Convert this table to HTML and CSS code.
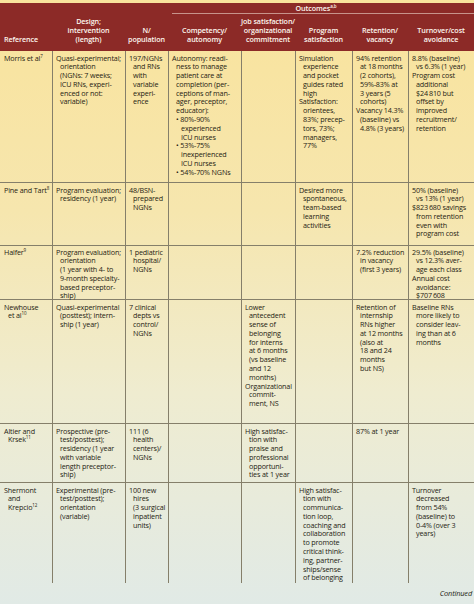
FILE: index.html
```html
<!DOCTYPE html>
<html>
<head>
<meta charset="utf-8">
<link rel="stylesheet" href="styles.css">
</head>
<body>
<div class="page">
  <div class="head">
    <div class="th ref"><span>Reference</span></div>
    <div class="th dsg"><span>Design;<br>intervention<br>(length)</span></div>
    <div class="th pop"><span>N/<br>population</span></div>
    <div class="th out"><span>Outcomes<sup class="hs">a,b</sup></span></div>
    <div class="th s1"><span>Competency/<br>autonomy</span></div>
    <div class="th s2"><span>Job satisfaction/<br>organizational<br>commitment</span></div>
    <div class="th s3"><span>Program<br>satisfaction</span></div>
    <div class="th s4"><span>Retention/<br>vacancy</span></div>
    <div class="th s5"><span>Turnover/cost<br>avoidance</span></div>
  </div>

  <div class="row r1">
    <div class="c first"><p class="b">Morris et al<sup>7</sup></p></div>
    <div class="c"><p class="b">Quasi-experimental;<br>orientation<br>(NGNs: 7 weeks;<br>ICU RNs, experi-<br>enced or not:<br>variable)</p></div>
    <div class="c"><p class="b">197/NGNs<br>and RNs<br>with<br>variable<br>experi-<br>ence</p></div>
    <div class="c"><p class="b">Autonomy: readi-<br>ness to manage<br>patient care at<br>completion (per-<br>ceptions of man-<br>ager, preceptor,<br>educator):</p><p class="b bl">•&nbsp;80%-90%<br>experienced<br>ICU nurses</p><p class="b bl">•&nbsp;53%-75%<br>inexperienced<br>ICU nurses</p><p class="b bl">•&nbsp;54%-70% NGNs</p></div>
    <div class="c"></div>
    <div class="c"><p class="b">Simulation<br>experience<br>and pocket<br>guides rated<br>high</p><p class="b">Satisfaction:<br>orientees,<br>83%; precep-<br>tors, 73%;<br>managers,<br>77%</p></div>
    <div class="c"><p class="b">94% retention<br>at 18 months<br>(2 cohorts),<br>59%-83% at<br>3 years (5<br>cohorts)</p><p class="b">Vacancy 14.3%<br>(baseline) vs<br>4.8% (3 years)</p></div>
    <div class="c"><p class="b">8.8% (baseline)<br>vs 6.3% (1 year)</p><p class="b">Program cost<br>additional<br>$24&#8201;810 but<br>offset by<br>improved<br>recruitment/<br>retention</p></div>
  </div>

  <div class="row r2">
    <div class="c first"><p class="b">Pine and Tart<sup>8</sup></p></div>
    <div class="c"><p class="b">Program evaluation;<br>residency (1 year)</p></div>
    <div class="c"><p class="b">48/BSN-<br>prepared<br>NGNs</p></div>
    <div class="c"></div>
    <div class="c"></div>
    <div class="c"><p class="b">Desired more<br>spontaneous,<br>team-based<br>learning<br>activities</p></div>
    <div class="c"></div>
    <div class="c"><p class="b">50% (baseline)<br>vs 13% (1 year)</p><p class="b">$823&#8201;680 savings<br>from retention<br>even with<br>program cost</p></div>
  </div>

  <div class="row r3">
    <div class="c first"><p class="b">Halfer<sup>9</sup></p></div>
    <div class="c"><p class="b">Program evaluation;<br>orientation<br>(1 year with 4- to<br>9-month specialty-<br>based preceptor-<br>ship)</p></div>
    <div class="c"><p class="b">1 pediatric<br>hospital/<br>NGNs</p></div>
    <div class="c"></div>
    <div class="c"></div>
    <div class="c"></div>
    <div class="c"><p class="b">7.2% reduction<br>in vacancy<br>(first 3 years)</p></div>
    <div class="c"><p class="b">29.5% (baseline)<br>vs 12.3% aver-<br>age each class</p><p class="b">Annual cost<br>avoidance:<br>$707&#8201;608</p></div>
  </div>

  <div class="row r4">
    <div class="c first"><p class="b">Newhouse<br>et al<sup>10</sup></p></div>
    <div class="c"><p class="b">Quasi-experimental<br>(posttest); intern-<br>ship (1 year)</p></div>
    <div class="c"><p class="b">7 clinical<br>depts vs<br>control/<br>NGNs</p></div>
    <div class="c"></div>
    <div class="c"><p class="b">Lower<br>antecedent<br>sense of<br>belonging<br>for interns<br>at 6 months<br>(vs baseline<br>and 12<br>months)</p><p class="b">Organizational<br>commit-<br>ment, NS</p></div>
    <div class="c"></div>
    <div class="c"><p class="b">Retention of<br>internship<br>RNs higher<br>at 12 months<br>(also at<br>18 and 24<br>months<br>but NS)</p></div>
    <div class="c"><p class="b">Baseline RNs<br>more likely to<br>consider leav-<br>ing than at 6<br>months</p></div>
  </div>

  <div class="row r5">
    <div class="c first"><p class="b">Altier and<br>Krsek<sup>11</sup></p></div>
    <div class="c"><p class="b">Prospective (pre-<br>test/posttest);<br>residency (1 year<br>with variable<br>length preceptor-<br>ship)</p></div>
    <div class="c"><p class="b">111 (6<br>health<br>centers)/<br>NGNs</p></div>
    <div class="c"></div>
    <div class="c"><p class="b">High satisfac-<br>tion with<br>praise and<br>professional<br>opportuni-<br>ties at 1 year</p></div>
    <div class="c"></div>
    <div class="c"><p class="b">87% at 1 year</p></div>
    <div class="c"></div>
  </div>

  <div class="row r6">
    <div class="c first"><p class="b">Shermont<br>and<br>Krepcio<sup>12</sup></p></div>
    <div class="c"><p class="b">Experimental (pre-<br>test/posttest);<br>orientation<br>(variable)</p></div>
    <div class="c"><p class="b">100 new<br>hires<br>(3 surgical<br>inpatient<br>units)</p></div>
    <div class="c"></div>
    <div class="c"></div>
    <div class="c"><p class="b">High satisfac-<br>tion with<br>communica-<br>tion loop,<br>coaching and<br>collaboration<br>to promote<br>critical think-<br>ing, partner-<br>ships/sense<br>of belonging</p></div>
    <div class="c"></div>
    <div class="c"><p class="b">Turnover<br>decreased<br>from 54%<br>(baseline) to<br>0-4% (over 3<br>years)</p></div>
  </div>

  <div class="cont">Continued</div>
</div>
</body>
</html>
```
FILE: styles.css
```css
html, body {
  margin: 0;
  padding: 0;
}
body {
  width: 474px;
  height: 604px;
  overflow: hidden;
  background: linear-gradient(to bottom, #f9e39c 0%, #f6e6ae 35%, #efecd0 65%, #e1eae6 100%);
  font-family: "Open Sans", "Noto Sans", sans-serif;
  font-size: 7.2px;
  letter-spacing: -0.15px;
  line-height: 8.8px;
  color: #1f1c13;
}
.page {
  padding-top: 3px;
}
.head {
  display: grid;
  grid-template-columns: 52px 73px 43px 73px 54px 57px 56px 66px;
  grid-template-rows: 11px 37px;
  background: #8c2a27;
  color: #fdf6ee;
  font-weight: 600;
  line-height: 9px;
  letter-spacing: -0.1px;
}
.th {
  display: flex;
  flex-direction: column;
  justify-content: flex-end;
  align-items: center;
  text-align: center;
  padding-bottom: 7px;
  white-space: nowrap;
}
.ref { grid-column: 1; grid-row: 1 / 3; align-items: flex-start; text-align: left; padding-left: 4px; }
.dsg { grid-column: 2; grid-row: 1 / 3; }
.pop { grid-column: 3; grid-row: 1 / 3; }
.out {
  grid-column: 4 / 9;
  grid-row: 1;
  justify-content: center;
  padding-bottom: 0;
  margin-left: 4px;
  padding-right: 14px;
  border-bottom: 1px solid #c7938b;
}
.s1 { grid-column: 4; grid-row: 2; }
.s2 { grid-column: 5; grid-row: 2; }
.s3 { grid-column: 6; grid-row: 2; }
.s4 { grid-column: 7; grid-row: 2; }
.s5 { grid-column: 8; grid-row: 2; }
.hs {
  font-size: 4.5px;
  line-height: 0;
  vertical-align: 3px;
}

.row {
  display: grid;
  grid-template-columns: 52px 73px 43px 73px 54px 57px 56px 66px;
  box-sizing: border-box;
}
.row + .row {
  border-top: 1px solid #857f6a;
}
.r1 { height: 131px; }
.r2 { height: 63px; }
.r3 { height: 54px; }
.r4 { height: 124px; }
.r5 { height: 59px; }
.r6 { height: 101px; }

.c {
  border-left: 1px solid #857f6a;
  padding: 2.5px 0 0 3px;
  white-space: nowrap;
}
.r3 .c {
  padding-top: 1.5px;
}
.c.first {
  border-left: none;
  padding-left: 4px;
}
.b {
  margin: 0;
  padding-left: 4px;
  text-indent: -4px;
}
.bl {
  padding-left: 9px;
  text-indent: -5px;
}
sup {
  font-size: 4.5px;
  line-height: 0;
  vertical-align: 3px;
}
.cont {
  text-align: right;
  font-style: italic;
  padding: 5px 2px 0 0;
  line-height: 10px;
  font-size: 7.4px;
}
```
